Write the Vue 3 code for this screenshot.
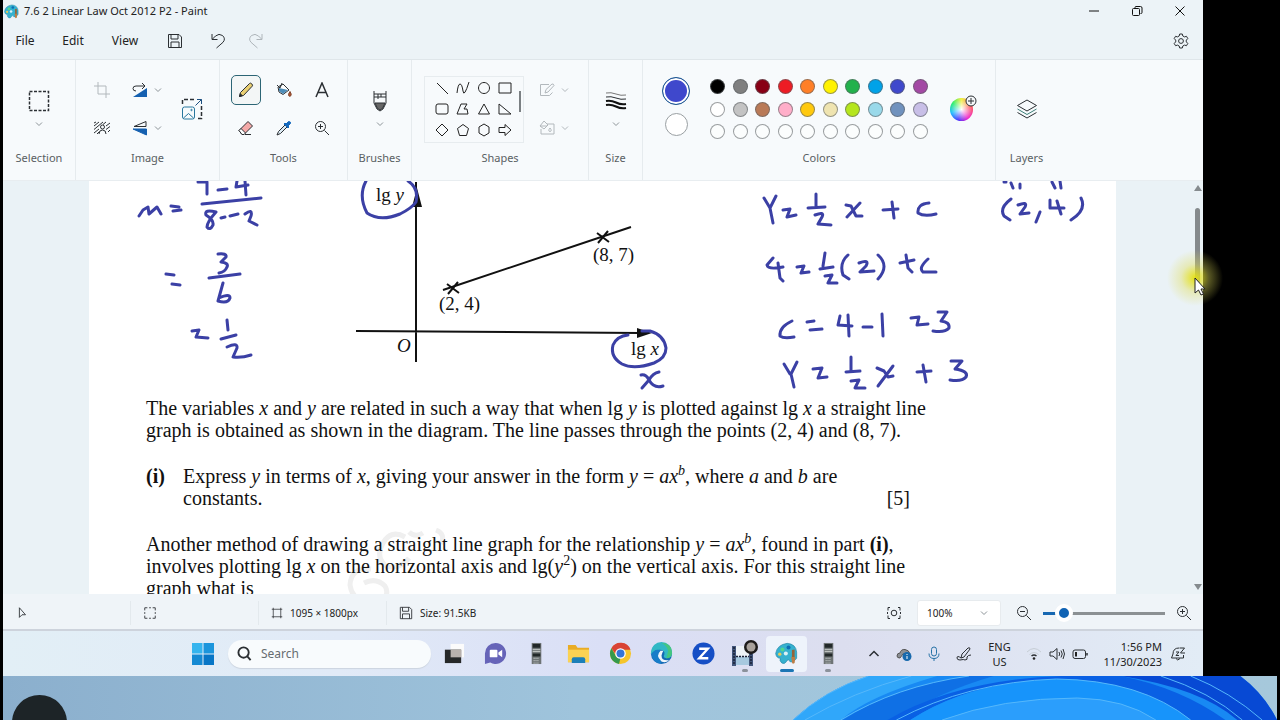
<template>
  <div class="desktop">
    <main class="paint">
      <header class="titlebar">
        <svg class="app-icon" viewBox="0 0 34 34"><use href="#palette" /></svg>
        <h1>7.6 2 Linear Law Oct 2012 P2 - Paint</h1>
        <div class="window-buttons">
          <button aria-label="Minimize"><svg viewBox="0 0 12 12"><path d="M1 6h10" /></svg></button>
          <button aria-label="Restore"><svg viewBox="0 0 12 12"><rect x="1.5" y="3.500" width="7" height="7" rx="1" /><path d="M4 3V2.500q0-1 1-1h4.500q1.500 0 1.500 1.500v4.500q0 1-1 1h-.5" /></svg></button>
          <button aria-label="Close"><svg viewBox="0 0 12 12"><path d="M1.500 1.500l9 9M10.500 1.500l-9 9" /></svg></button>
        </div>
      </header>

      <nav class="menubar">
        <button v-for="item in menus" :key="item" class="menu">{{ item }}</button>
        <button class="menu-icon save" aria-label="Save"><svg viewBox="0 0 16 16"><use href="#floppy" /></svg></button>
        <button class="menu-icon" aria-label="Undo"><svg viewBox="0 0 16 16"><path d="M2 1v5.500h5.500M2.500 6L5.500 3q3.500-3 7-.5 3.500 3.300.5 6.800L6.500 15" /></svg></button>
        <button class="menu-icon redo" aria-label="Redo" disabled><svg viewBox="0 0 16 16"><path d="M14 1v5.500H8.500M13.500 6l-3-3q-3.500-3-7-.5-3.500 3.300-.5 6.800L9.500 15" /></svg></button>
        <button class="menu-icon settings" aria-label="Settings">
          <svg viewBox="0 0 16 16"><path d="M6.700 1h2.600l.5 2 1.700.9 2-.6 1.300 2.300-1.500 1.500v1.800l1.500 1.500-1.300 2.300-2-.6-1.700.9-.5 2H6.700l-.5-2-1.700-.9-2 .6-1.300-2.300 1.500-1.500V7.100L1.200 5.600l1.300-2.300 2 .6L6.200 3z" /><circle cx="8" cy="8" r="2.400" /></svg>
        </button>
      </nav>

      <section class="ribbon">
        <div class="group selection">
          <button class="stack" aria-label="Selection">
            <svg class="icon-lg" viewBox="0 0 22 22"><rect x="1.500" y="1.500" width="19" height="19" stroke-width="1.500" stroke-dasharray="3 1.500" /></svg>
            <svg class="chevron" viewBox="0 0 8 8"><use href="#down" /></svg>
          </button>
          <span class="label">Selection</span>
        </div>

        <div class="group image">
          <div class="image-tools">
            <button class="faded" aria-label="Crop"><svg viewBox="0 0 16 16"><path d="M4 0v12h12M0 4h12v12" /></svg></button>
            <button class="split" aria-label="Rotate">
              <svg viewBox="0 0 16 16"><path d="M10 1l3 3-3 3M13 4H4Q1 4 1 6.500T4 9" /><path d="M15 6v9H1z" fill="#1560b0" stroke="none" /></svg>
              <svg class="chevron" viewBox="0 0 8 8"><use href="#down" /></svg>
            </button>
            <button class="resize" aria-label="Resize">
              <svg class="icon-lg" viewBox="0 0 22 22"><path d="M1.500 6V1.500H14M20.500 8v12.500H15" stroke-dasharray="4 2" stroke-width="1.500" /><path d="M14.500 7.500L20.500 1.500M16 1.500h4.500V6" stroke="#1d4f80" /><rect x="1.500" y="9" width="12" height="12" rx="2" stroke="#27769d" /><path d="M2.500 20l5-4.500 5 4.500" stroke="#27769d" /><circle cx="10.500" cy="12" r=".7" stroke="#27769d" /></svg>
            </button>
            <button aria-label="Remove background"><svg viewBox="0 0 16 16"><path d="M0 6l5-4M0 9.500L9 2M12 2l-3 2.500M0 13l5-4M16 3l-4 3M16 6.500l-4 3M16 10l-2 2M3 14l2-2M0 3l2-1" /><circle cx="8.500" cy="7" r="2" /><path d="M5 14q0-4 3.500-4t3.500 4" /></svg></button>
            <button class="split" aria-label="Flip">
              <svg viewBox="0 0 16 16"><path d="M14 1.500v5H2z" /><path d="M14.500 9v6L1 9z" fill="#1560b0" stroke="#1560b0" /></svg>
              <svg class="chevron" viewBox="0 0 8 8"><use href="#down" /></svg>
            </button>
          </div>
          <span class="label">Image</span>
        </div>

        <div class="group tools">
          <div class="tool-grid">
            <button class="active" aria-label="Pencil"><svg viewBox="0 0 16 16"><path d="M1.500 14.500l1-4L11.500 1.500q1-1 2.300.4t.4 2.300L5.500 13.500z" fill="#e9cf72" /><path d="M1.500 14.500l.8-2.800 2 2z" fill="#222" /></svg></button>
            <button aria-label="Fill"><svg viewBox="0 0 16 16"><path d="M2 5l5-3 6 6-6 4.500L3 10z" fill="#fff" /><path d="M3 6l9 2-5 4-4-3z" fill="#4e8db8" stroke="none" /><path d="M6 1l-2 5M1 3l3 3" /><path d="M14 9.500q2 3 .8 4.300-1 1-2 0-1-1.300 1.200-4.300z" fill="#b85a32" stroke="#7e432d" /></svg></button>
            <button aria-label="Text"><svg viewBox="0 0 16 16"><path d="M2 15L8 1l6 14M4 10.500h8" stroke-width="1.500" /></svg></button>
            <button aria-label="Eraser"><svg viewBox="0 0 16 16"><path d="M1 10.500L10 1.500l4.500 4.500-8.500 8.500H4z" fill="#f4a9a8" /><path d="M1 10.500l2-2L7.500 13 6 14.500H4z" fill="#fff" /><path d="M7 14.500h6" /></svg></button>
            <button aria-label="Color picker"><svg viewBox="0 0 16 16"><path d="M9 5L2.500 11.500 1 15l3.500-1.500L11 7" fill="#dceaf3" /><path d="M8 4l4 4 1-1-1-1 2.500-2.500q.5-2-2-2L10 4 9 3z" fill="#1669bd" stroke="#1669bd" /></svg></button>
            <button aria-label="Magnifier"><svg viewBox="0 0 16 16"><use href="#zoom-in" /></svg></button>
          </div>
          <span class="label">Tools</span>
        </div>

        <div class="group brushes">
          <button class="stack" aria-label="Brushes">
            <svg class="icon-lg" viewBox="0 0 22 22"><path d="M5 1v6h12V1M5 4h12M5 7v6l3 6 3 2 3-2 3-6V7" /><path d="M6 13h10l-2.500 5.500L11 20l-2.500-1.500z" fill="#666" /><path d="M9 4v5M12 4v3" /></svg>
            <svg class="chevron" viewBox="0 0 8 8"><use href="#down" /></svg>
          </button>
          <span class="label">Brushes</span>
        </div>

        <div class="group shapes">
          <div class="shape-row">
            <div class="gallery">
              <button v-for="shape in shapes" :key="shape.name" :aria-label="shape.name">
                <svg viewBox="0 0 14 14"><path :d="shape.d" /></svg>
              </button>
            </div>
            <div class="shape-options">
              <button class="split faded" aria-label="Shape outline">
                <svg viewBox="0 0 16 16"><path d="M10 2.500H1.500v11h9l3-3M6 11l1-3.500L13 2q1.500-.5 2 1.500L9 10z" /></svg>
                <svg class="chevron" viewBox="0 0 8 8"><use href="#down" /></svg>
              </button>
              <button class="split faded" aria-label="Shape fill">
                <svg viewBox="0 0 16 16"><path d="M8 4h7v10H2V9M5 1l4 4-4 4-4-3zM1 6h7M11 8q2.500 3 0 3.500-2.500-.5 0-3.500z" /></svg>
                <svg class="chevron" viewBox="0 0 8 8"><use href="#down" /></svg>
              </button>
            </div>
          </div>
          <span class="label">Shapes</span>
        </div>

        <div class="group size">
          <button class="stack" aria-label="Size">
            <svg class="icon-lg" viewBox="0 0 22 22"><path d="M1 3q5-1 10 1t10 1" stroke-width="1" stroke="#777" /><path d="M1 7q5-1 10 1t10 1" /><path d="M1 11q5-1 10 1.500T21 14" stroke-width="2" stroke="#111" /><path d="M1 15q5-1 10 1.500T21 18" stroke-width="2" stroke="#111" /></svg>
            <svg class="chevron" viewBox="0 0 8 8"><use href="#down" /></svg>
          </button>
          <span class="label">Size</span>
        </div>

        <div class="group colors">
          <div class="color-row">
            <div class="current">
              <button class="primary" aria-label="Color 1"></button>
              <button class="secondary" aria-label="Color 2"></button>
            </div>
            <div class="swatches">
              <button v-for="(color, i) in colors" :key="i" :style="{ background: color }" :aria-label="'Swatch ' + (i + 1)"></button>
            </div>
            <button class="wheel" aria-label="Edit colors"><svg viewBox="0 0 12 12"><circle cx="6" cy="6" r="5" fill="#f5f8fa" /><path d="M6 3v6M3 6h6" /></svg></button>
          </div>
          <span class="label">Colors</span>
        </div>

        <div class="group layers">
          <button class="stack" aria-label="Layers">
            <svg class="icon-lg" viewBox="0 0 22 22"><path d="M11 2l9.500 5.500L11 13 1.500 7.500z" /><path d="M1.500 11L11 16.500 20.500 11" stroke="#3b7f78" /><path d="M1.500 14.500L11 20l9.500-5.500" /></svg>
          </button>
          <span class="label">Layers</span>
        </div>
      </section>

      <section class="workspace">
        <article class="page">
          <svg class="figure" viewBox="89 181 1027 216" role="img" aria-label="Straight line graph with worked notes">
            <g class="watermark">
              <path d="M405 537q-14-8-22 6t3 23q14 4 23-8M409 532q6 6 14 1M436 530q10 4 5 14M371 569q-20-2-21 16 2 15 17 16M364 583q12-6 21 3 5 8-4 17" />
            </g>
            <g class="axes">
              <path d="M416 182V362M356 331L640 333M443 290L631 227" />
              <path d="M447 284l12 9M458 282l-10 12M597 233l12 9M608 231l-10 12" />
              <path class="head" d="M412 207l5-19 5 19zM637 328v10l15-5z" />
              <text x="376" y="201">lg <tspan class="var">y</tspan></text>
              <text x="631" y="355">lg <tspan class="var">x</tspan></text>
              <text x="439" y="310">(2, 4)</text>
              <text x="593" y="261">(8, 7)</text>
              <text class="var" x="397" y="352">O</text>
            </g>
            <g class="ink">
              <path v-for="(d, i) in ink" :key="i" :d="d" />
            </g>
          </svg>
          <div class="question">
            <p>
              <span class="line">The variables <i>x</i> and <i>y</i> are related in such a way that when lg <i>y</i> is plotted against lg <i>x</i> a straight line</span>
              <span class="line">graph is obtained as shown in the diagram. The line passes through the points (2, 4) and (8, 7).</span>
            </p>
            <div class="part">
              <b>(i)</b>
              <p>
                <span class="line">Express <i>y</i> in terms of <i>x</i>, giving your answer in the form <i>y</i> = <i>ax<sup>b</sup></i>, where <i>a</i> and <i>b</i> are</span>
                <span class="line last">constants. <span>[5]</span></span>
              </p>
            </div>
            <p>
              <span class="line">Another method of drawing a straight line graph for the relationship <i>y</i> = <i>ax<sup>b</sup></i>, found in part <b>(i)</b>,</span>
              <span class="line">involves plotting lg <i>x</i> on the horizontal axis and lg(<i>y</i><sup>2</sup>) on the vertical axis. For this straight line</span>
              <span class="line">graph what is</span>
            </p>
          </div>
        </article>
        <div class="scrollbar">
          <svg viewBox="0 0 8 8"><path d="M4 1l4 6H0z" /></svg>
          <div class="thumb"></div>
          <svg class="bottom" viewBox="0 0 8 8"><path d="M4 7L0 1h8z" /></svg>
        </div>
      </section>

      <footer class="statusbar">
        <div class="cell position"><svg viewBox="0 0 16 16"><path d="M5 2v11l3-3h4z" /></svg></div>
        <div class="cell area"><svg viewBox="0 0 16 16"><path d="M2 5V2h3M11 2h3v3M14 11v3h-3M5 14H2v-3M7 2h2M7 14h2M2 7v2M14 7v2" /></svg></div>
        <div class="cell dims"><svg viewBox="0 0 16 16"><path d="M3 1v14M13 1v14M1 3h14M1 13h14" /></svg>1095 × 1800px</div>
        <div class="cell file"><svg viewBox="0 0 16 16"><use href="#floppy" /></svg>Size: 91.5KB</div>
        <div class="zoom">
          <button aria-label="Fit to window"><svg viewBox="0 0 16 16"><path d="M4 2.500H2v3M12 2.500h2v3M14 10.500v3h-2M4 13.500H2v-3M1.500 7v2M14.500 7v2" /><circle cx="8" cy="8" r="2.800" /></svg></button>
          <div class="zoom-level">
            <select v-model="level" aria-label="Zoom level"><option>100%</option><option>200%</option></select>
            <svg class="chevron" viewBox="0 0 8 8"><use href="#down" /></svg>
          </div>
          <button aria-label="Zoom out"><svg viewBox="0 0 16 16"><circle cx="6.500" cy="6.500" r="5" /><path d="M10.500 10.500L15 15M4 6.500h5" /></svg></button>
          <input v-model="slider" type="range" min="0" max="100" aria-label="Zoom" />
          <button aria-label="Zoom in"><svg viewBox="0 0 16 16"><use href="#zoom-in" /></svg></button>
        </div>
      </footer>

      <div class="pointer">
        <svg viewBox="0 0 12 19"><path d="M1 1v15l3.500-3 2.500 5 2.500-1-2.500-5H11z" /></svg>
      </div>
    </main>

    <nav class="taskbar">
      <button class="start" aria-label="Start">
        <svg viewBox="0 0 22 22"><path d="M0 0h10.500v10.500H0z" fill="#35b4ee" /><path d="M11.500 0H22v10.500H11.500z" fill="#1b95dc" /><path d="M0 11.500h10.500V22H0z" fill="#168ad3" /><path d="M11.500 11.500H22V22H11.500z" fill="#0876c6" /></svg>
      </button>
      <label class="search">
        <svg viewBox="0 0 16 16"><circle cx="7" cy="7" r="5.500" /><path d="M11 11l3.500 4" /></svg>
        <input type="text" placeholder="Search" aria-label="Search" />
      </label>
      <div class="apps">
        <button aria-label="Task view"><svg viewBox="0 0 24 24"><path d="M9 2h14v14H9z" fill="#fbfbfb" /><path d="M3 8h17v14H3z" fill="#262829" /><path d="M9 8h11v8H9z" fill="#b9b2ae" /></svg></button>
        <button aria-label="Chat"><svg viewBox="0 0 24 24"><path d="M12 1a11 11 0 1 1-5.500 20.500L1 23V12A11 11 0 0 1 12 1z" fill="#6664b8" /><rect x="6" y="8" width="8" height="8" rx="1" fill="#fff" /><path d="M15 11l4-3v8l-4-3z" fill="#fff" /></svg></button>
        <button aria-label="Calculator"><svg viewBox="0 0 24 24"><use href="#remote" /></svg></button>
        <button aria-label="File Explorer"><svg viewBox="0 0 24 24"><path d="M1 3h8l2 3h12v15H1z" fill="#e9ac25" /><path d="M1 8h22v13H1z" fill="#fbd253" /><path d="M5 22v-4q0-2 2-2h10q2 0 2 2v4z" fill="#1c7fb8" /></svg></button>
        <button aria-label="Chrome"><svg viewBox="0 0 24 24"><circle cx="12" cy="12" r="11" fill="#f5c52b" /><path d="M2.500 6.500A11 11 0 0 1 22.500 8H12l-4 6z" fill="#d94235" /><path d="M2.500 6.500l5.200 9 4.300 1-1.500 6.400A11 11 0 0 1 2.500 6.500z" fill="#35994d" /><circle cx="12" cy="12" r="5.500" fill="#fff" /><circle cx="12" cy="12" r="4.200" fill="#3375d6" /></svg></button>
        <button aria-label="Edge"><svg viewBox="0 0 24 24"><circle cx="12" cy="12" r="11" fill="#1569b4" /><path d="M1 11A11 11 0 0 1 23 11q0 6-6 6-4-1-2-4 1-5-5-5-6 0-9 5z" fill="#31b8c5" /><path d="M12 1q11 0 11 10 0 6-6 6l2-8q-2-6-7-8z" fill="#45c680" /><path d="M10 9q-5 5 0 10 5 4 10 0-8 1-8-5 1-4 2-5z" fill="#eef5fb" /><path d="M1.500 13Q5 6 11 9q-5 5 0 10l1 4Q3 22 1.500 13z" fill="#177dc9" /></svg></button>
        <button aria-label="Zoom app"><svg viewBox="0 0 24 24"><circle cx="12" cy="12" r="11.500" fill="#164fc5" /><path d="M7.500 7h9l-9 10h9.500" fill="none" stroke="#fff" stroke-width="2.500" /></svg></button>
        <button class="running" aria-label="Recorder"><svg class="wide" viewBox="0 0 28 28"><path d="M1 6h4v20H1zM18 6h4v20h-4z" fill="#42557a" /><path d="M5 6h13v10H5z" fill="#edf2f7" /><path d="M5 17h13v8H5z" fill="#a6c8df" /><path d="M5 16.500h13M3 7v18M20 7v18" stroke="#1a2236" stroke-width="1.500" stroke-dasharray="2 1" /><circle cx="20" cy="7" r="7" fill="#1d1b1a" /><circle cx="20" cy="7" r="4.500" fill="#a8a19b" /></svg></button>
        <button class="running current-app" aria-label="Paint"><svg viewBox="0 0 34 34"><use href="#palette" /></svg></button>
        <button class="running" aria-label="Remote"><svg viewBox="0 0 24 24"><use href="#remote" /></svg></button>
      </div>
      <div class="tray">
        <button aria-label="Hidden icons"><svg viewBox="0 0 16 16"><path d="M3.500 10L8 5.500l4.500 4.500" stroke-width="1.500" /></svg></button>
        <button aria-label="OneDrive"><svg viewBox="0 0 16 16"><path d="M1 10q0-3 3-3 1-4 5-3.500t5 4.500H7L4 12q-3 0-3-2z" fill="#8b8f94" stroke="#555" /><circle cx="11" cy="10.500" r="4.500" fill="#1669ad" stroke="none" /><path d="M11 10v3M11 8v1" stroke="#fff" /></svg></button>
        <button aria-label="Microphone"><svg viewBox="0 0 16 16"><rect x="5.500" y="1" width="5" height="9" rx="2.500" stroke="#2772a6" /><path d="M3 7.500q0 5 5 5t5-5M8 12.500V15" stroke="#2772a6" /></svg></button>
        <button aria-label="Pen"><svg viewBox="0 0 16 16"><path d="M5 12l1-4 6-6q2-1 2 1L8 11zM5 12q-4-3-4 0 0 2 3 2 4-1 5 0 3 0 2-3 1-2 4-2" /></svg></button>
        <button class="lang">ENG<br />US</button>
        <button class="network" aria-label="Network and sound">
          <svg viewBox="0 0 16 16"><path d="M1 6q7-7 14 0M3.500 8.500q4.500-4 9 0" stroke="#c6cdd5" /><path d="M5.500 10q2.500-2 5 0" stroke-width="1.500" /><circle cx="8" cy="12.500" r="1.300" fill="#222" stroke="none" /></svg>
          <svg viewBox="0 0 16 16"><path d="M1 6h3l4-3.500v11L4 10H1zM10 6q1.500 2 0 4M12 4.500q2.500 3.500 0 7M14 3q3 5 0 10" /></svg>
          <svg viewBox="0 0 16 16"><rect x="1" y="4" width="12.500" height="8.500" rx="2" /><path d="M15 7v2.500" stroke-width="1.500" /><path d="M3 6h2v4.500H3z" fill="#222" stroke="none" /></svg>
        </button>
        <time>1:56 PM<br />11/30/2023</time>
        <button class="bell" aria-label="Notifications"><svg viewBox="0 0 16 16"><path d="M9 2Q3 2 3 8l-1.500 4h12V9M6 12.500q1.500 3 4 0M9.500 2h5L10.500 7H15M6 6h3L6 9.500h3" /></svg></button>
      </div>
    </nav>

    <div class="wallpaper">
      <svg viewBox="0 0 487 44" preserveAspectRatio="none">
        <path d="M0 44Q32 14 76 0H450Q474 18 487 44z" fill="#1889f3" />
        <path d="M0 44Q32 14 76 0H145Q76 20 48 44z" fill="#30a7fa" />
        <path d="M50 44Q104 10 177 0H202Q146 16 104 44z" fill="#0f70e5" />
        <path d="M95 44Q164 4 270 0H330Q390 12 435 44H400Q350 4 265 3 176 6 118 44z" fill="#0960e4" />
        <path d="M118 44Q176 6 265 3 350 4 400 44z" fill="#1794fb" />
        <path d="M150 44Q210 22 286 22 334 23 365 44z" fill="#2b9efc" />
        <path d="M330 0H450Q474 18 487 44H447Q410 12 330 0z" fill="#0749d4" />
        <path class="edge" d="M0 44Q32 14 76 0M12 44Q60 16 119 0M48 44Q104 10 177 0M104 44Q176 6 265 3 350 4 400 44M150 44Q210 22 286 22 334 23 365 44M370 0Q420 16 452 44M400 0Q440 16 472 44" />
      </svg>
      <div class="disc"></div>
    </div>

    <svg class="symbols" aria-hidden="true">
      <symbol id="down" viewBox="0 0 8 8"><path d="M1 2.500l3 3 3-3" /></symbol>
      <symbol id="zoom-in" viewBox="0 0 16 16"><circle cx="6.500" cy="6.500" r="5" /><path d="M10.500 10.500L15 15M4 6.500h5M6.500 4v5" /></symbol>
      <symbol id="floppy" viewBox="0 0 16 16"><path d="M2 1.500h10L14.500 4v10.500h-13V1.500zM4 1.500V6h7V1.500M4 14.500V9h8v5.500" /></symbol>
      <symbol id="palette" viewBox="0 0 34 34">
        <path d="M18 2Q31 3 32 15v9q-5 7-10 5-2-6-6 1-2 3-6 1-4-4-2-7-6 0-7-7Q3 4 18 2z" fill="#35b1cf" stroke="#2785a6" />
        <circle cx="20" cy="8" r="3" fill="#0c6db5" stroke="none" /><circle cx="11" cy="11" r="3" fill="#51d590" stroke="none" /><circle cx="7" cy="18" r="2.500" fill="#e6cb58" stroke="none" /><circle cx="16" cy="17" r="3" fill="#d9f2f7" stroke="none" />
        <path d="M25 12l4-1v12h-4z" fill="#93643a" stroke="none" /><path d="M24 22h6l-1 9q-4 3-4-2z" fill="#bc7d45" stroke="none" />
      </symbol>
      <symbol id="remote" viewBox="0 0 24 24">
        <path d="M7 1h10v22H7z" fill="#6e7475" stroke="none" /><path d="M8 2h8v4H8zM8 12h8v3H8z" fill="#222829" stroke="none" /><path d="M8 8h8M8 10h8" stroke="#c8ccca" /><path d="M9 17h6M9 19.500h6M9 22h6" stroke="#dfe3e2" stroke-dasharray="1 1" />
      </symbol>
    </svg>
  </div>
</template>

<script setup>
import { ref } from 'vue'

const level = ref('100%')
const slider = ref(12)

const menus = ['File', 'Edit', 'View']

const shapes = [
  { name: 'Line', d: 'M2 2l11 11' },
  { name: 'Curve', d: 'M1 12q1-9 3-9t3 7 6-9' },
  { name: 'Oval', d: 'M7 1.500a5.500 5.500 0 1 0 .01 0z' },
  { name: 'Rectangle', d: 'M1 2h12v10H1z' },
  { name: 'Rounded rectangle', d: 'M3 2h8q2 0 2 2v6q0 2-2 2H3q-2 0-2-2V4q0-2 2-2z' },
  { name: 'Polygon', d: 'M5 2h6L8 7h3l1 5H1z' },
  { name: 'Triangle', d: 'M7 2l5.500 10h-11z' },
  { name: 'Right triangle', d: 'M1 2v10h12z' },
  { name: 'Diamond', d: 'M7 1l6 6-6 6-6-6z' },
  { name: 'Pentagon', d: 'M7 1.500l5.500 4-2 7h-7l-2-7z' },
  { name: 'Hexagon', d: 'M7 1l5 3v6l-5 3-5-3V4z' },
  { name: 'Right arrow', d: 'M1 4.500h6v-3L13 7l-6 5.500v-3H1z' }
]

const colors = [
  '#000000', '#7f7f7f', '#880015', '#ed1c24', '#ff7f27', '#fff200', '#22b14c', '#00a2e8', '#3f48cc', '#a349a4',
  '#ffffff', '#c3c3c3', '#b97a57', '#ffaec9', '#ffc90e', '#efe4b0', '#b5e61d', '#99d9ea', '#7092be', '#c8bfe7',
  ...Array(10).fill('#fbfdfd')
]

// pen strokes, one entry per written line
const ink = [
  // m = (7 - 4) / (8 - 2)
  'M139 216L143 210 148 207 149 214 157 207 161 214M171 206L179 207M173 211L181 210M198 182H207V194M218 190L227 189M237 181L236 187 248 185M245 181L246 195M202 204L261 198M216 212Q204 209 206 215 214 220 213 225 210 231 207 227 207 222 216 212M221 218L225 217M230 216L238 214M245 214Q253 208 251 216L249 221 257 225',
  // = 3 / 6
  'M166 274L174 275M172 284L180 285M218 254Q227 253 226 257L221 262Q229 263 227 267 225 272 219 273M209 278L240 274M223 283L218 301Q228 304 230 298 230 293 219 298',
  // = 1 / 2
  'M192 331L199 330 196 337 208 338M227 320L228 330M221 339L236 335M227 347Q238 342 237 348L233 357Q242 358 251 355',
  // loops round the axis names
  'M366 181Q358 196 367 213 380 222 400 214 412 208 416 202 419 188 408 181',
  'M628 335Q617 336 613 345 610 357 622 364 634 370 654 363 666 358 666 348 664 335 650 331L642 331',
  'M641 375Q646 374 649 380 654 389 663 386M659 372Q653 373 649 380L642 388',
  // Y = 1/2 x + c
  'M764 198L770 208M776 196L770 208 773 223M783 210L790 209 787 217 796 215M816 194V206M808 208L825 207M815 215Q825 211 822 217L818 224 831 225M846 205L851 206 856 216 862 216M860 203L847 217M883 210L898 209M892 202L894 218M929 203Q917 204 918 213 924 217 936 214',
  // 4 = 1/2 (2) + c
  'M773 258L767 265Q768 270 783 267M778 263L780 278 783 281M797 267L804 266 801 273 809 272M825 253L823 266M820 269L833 267M825 276L832 275 828 283 837 283M848 255Q839 263 843 275L849 279M859 263Q870 259 866 266L860 272 874 271M878 255Q890 266 878 279M900 263L914 260M906 255L908 268 912 272M928 259Q918 268 923 272L936 272',
  // c = 4 - 1 = 3
  'M792 321Q779 327 780 336 784 339 794 337M807 322L814 321M810 330L822 329M840 316L838 325 852 326M848 315L849 336M863 327L872 327M882 314L883 336M911 318L919 317 917 325 928 324M938 312L947 312 941 321Q950 322 949 328 945 333 933 331',
  // Y = 1/2 x + 3
  'M784 364L790 374M797 362L791 374 794 387M813 369L822 368 818 378 827 377M851 357V370M846 372L860 371M851 381L859 380 855 388 865 388M877 368L884 371 888 377 893 376M893 366L878 386M917 372L931 371M923 365L926 382M951 361L962 361 955 369Q969 371 966 377 962 382 950 380',
  // (2, 4)
  'M1011 199Q999 208 1004 216L1010 220M1018 205Q1028 201 1025 207L1020 214 1029 213M1040 212L1036 222M1050 200V208L1064 208M1057 201L1061 214M1081 198Q1087 210 1071 220M1004 182H1006M1011 183L1013 188M1020 184V188M1052 182L1055 188M1060 181L1061 188'
]
</script>

<style>
body {
  margin: 0;
  background: #000;
}
</style>

<style scoped>
.desktop {
  display: flex;
  flex-direction: column;
  height: 100vh;
  padding: 0 3px;
  box-sizing: border-box;
  overflow: hidden;
  background: #000;
  color: #222;
  font-family: "Noto Sans", "Open Sans", sans-serif;
  font-size: 12px;
}

.symbols {
  position: absolute;
  width: 0;
  height: 0;
}

button {
  display: flex;
  align-items: center;
  justify-content: center;
  padding: 0;
  border: 0;
  background: none;
  color: inherit;
  font: inherit;
}

svg {
  display: block;
  flex: none;
  width: 16px;
  height: 16px;
  fill: none;
  stroke: #2b2f33;
}

.paint {
  position: relative;
  display: flex;
  flex: 1;
  flex-direction: column;
  min-height: 0;
  margin-right: 74px;
  background: #ecf3f7;
}

.titlebar {
  display: flex;
  align-items: center;
  height: 22px;
  padding: 0 13px 0 1px;
}

.app-icon {
  width: 15px;
  height: 15px;
}

h1 {
  flex: 1;
  margin: 0 0 0 5px;
  font-size: 11px;
  font-weight: 400;
  line-height: 20px;
}

.window-buttons {
  display: flex;
  gap: 22px;
}

.window-buttons button {
  width: 21px;
  height: 20px;
}

.window-buttons svg {
  width: 12px;
  height: 12px;
  stroke: #111;
}

.menubar {
  display: flex;
  align-items: center;
  height: 38px;
  padding-right: 14px;
  border-bottom: 1px solid #dfe6ea;
  box-sizing: border-box;
}

.menu {
  width: 52px;
}

.menu:first-child {
  width: 44px;
}

.menu-icon {
  width: 38px;
}

.menu-icon.save {
  width: 48px;
}

.menu-icon.redo svg {
  stroke: #aeb5ba;
}

.menu-icon.settings {
  width: 16px;
  margin-left: auto;
}

.ribbon {
  display: flex;
  height: 121px;
  background: #f7fafc;
  border-bottom: 1px solid #e8edf0;
  box-sizing: border-box;
}

.group {
  display: flex;
  flex-direction: column;
  align-items: center;
  padding-top: 11px;
  border-right: 1px solid #e6ebee;
  box-sizing: border-box;
}

.group > :first-child {
  height: 76px;
}

.label {
  line-height: 22px;
  font-size: 11px;
  color: #5a5f63;
}

.stack {
  flex-direction: column;
  gap: 8px;
}

.icon-lg {
  width: 22px;
  height: 22px;
}

.chevron {
  width: 8px;
  height: 8px;
  stroke: #8d9498;
}

.faded svg {
  stroke: #b2b8bc;
}

.selection { width: 73px; }
.image { width: 144px; }
.tools { width: 128px; }
.brushes { width: 64px; }
.shapes { width: 177px; }
.size { width: 54px; }
.colors { width: 353px; }
.layers { width: 61px; border: 0; }

.image-tools {
  display: grid;
  grid-template-columns: 30px 36px 42px;
  grid-template-rows: 38px 38px;
  column-gap: 9px;
  padding-left: 4px;
}

.split {
  gap: 6px;
  padding-left: 6px;
}

.resize {
  grid-row: 1 / 3;
  grid-column: 3;
}

.tool-grid {
  display: grid;
  grid-template-columns: repeat(3, 30px);
  grid-template-rows: repeat(2, 30px);
  gap: 8px;
  align-content: center;
}

.tool-grid .active {
  border: 1px solid #2c6575;
  border-radius: 5px;
  background: #f3f6f6;
}

.shape-row {
  display: flex;
  align-items: center;
  gap: 9px;
  padding-right: 7px;
}

.gallery {
  display: grid;
  grid-template-columns: repeat(4, 21px);
  grid-auto-rows: 21px;
  padding: 1px 8px 1px 6px;
  border: 1px solid #e7ecef;
  background: linear-gradient(#7b8083, #7b8083) right 2px top 14px / 2px 21px no-repeat;
}

.gallery svg {
  width: 14px;
  height: 14px;
  stroke: #222;
}

.shape-options {
  display: grid;
  grid-template-rows: 38px 38px;
}

.color-row {
  display: flex;
  align-items: center;
  padding-right: 3px;
}

.current {
  display: flex;
  flex-direction: column;
  align-items: center;
  gap: 8px;
  margin-right: 20px;
  padding-bottom: 5px;
}

.primary,
.secondary {
  width: 28px;
  height: 28px;
  border: 1px solid #1c5b8d;
  border-radius: 50%;
  background: #3f48cc;
  box-shadow: inset 0 0 0 2px #fff;
}

.secondary {
  width: 23px;
  height: 23px;
  border-color: #999fa2;
  background: #fff;
}

.swatches {
  display: grid;
  grid-template-columns: repeat(10, 15px);
  grid-template-rows: repeat(3, 15px);
  place-content: space-between;
  width: 218px;
  height: 60px;
}

.swatches button {
  border: 1px solid rgba(90, 95, 98, 0.6);
  border-radius: 50%;
}

.wheel {
  align-items: flex-start;
  justify-content: flex-end;
  width: 23px;
  height: 23px;
  margin-left: 22px;
  border-radius: 50%;
  background: radial-gradient(#fff, transparent 70%), conic-gradient(#ee3, #f55 20%, #e2c 40%, #43f 55%, #1bf 70%, #2e6 85%, #ee3);
}

.wheel svg {
  width: 12px;
  height: 12px;
  margin: -3px -4px 0 0;
}

.workspace {
  display: flex;
  flex: 1;
  min-height: 0;
  padding-left: 86px;
  overflow: hidden;
  background: #eaf2f6;
}

.page {
  flex: 1;
  background: #fff;
}

.figure {
  width: 100%;
  height: auto;
  overflow: visible;
}

.watermark {
  stroke: #efefef;
  stroke-width: 5;
}

.axes {
  stroke: #111;
  stroke-width: 2;
}

.axes .head {
  fill: #111;
  stroke: none;
}

.axes text {
  fill: #111;
  stroke: none;
  font: 19px "Liberation Serif", serif;
}

.axes .var {
  font-style: italic;
}

.ink {
  stroke: #3b40a5;
  stroke-width: 3;
  stroke-linecap: round;
  stroke-linejoin: round;
}

.question {
  position: relative;
  display: flex;
  flex-direction: column;
  gap: 24px;
  padding-left: 57px;
  color: #111;
  font: 20px/22px "Liberation Serif", serif;
}

.question p {
  margin: 0;
}

.line {
  display: block;
  white-space: nowrap;
}

.line.last {
  display: flex;
  justify-content: space-between;
}

.part {
  display: grid;
  grid-template-columns: 37px 727px;
}

sup {
  font-size: 14px;
  line-height: 0;
}

.scrollbar {
  display: flex;
  flex-direction: column;
  align-items: center;
  width: 11px;
  margin-left: 76px;
  padding: 3px 0;
}

.scrollbar svg {
  width: 8px;
  height: 8px;
  fill: #858b8e;
  stroke: none;
}

.scrollbar .thumb {
  width: 5px;
  height: 76px;
  margin-top: 16px;
  border-radius: 3px;
  background: #858a8c;
}

.scrollbar .bottom {
  margin-top: auto;
}

/* mouse pointer with its highlight, floating over the scrollbar */
.pointer {
  position: absolute;
  top: 250px;
  right: -20px;
  width: 56px;
  height: 56px;
  background: radial-gradient(closest-side, rgba(228, 224, 20, 0.9) 5%, rgba(224, 221, 90, 0.4) 50%, transparent);
}

.pointer svg {
  width: 12px;
  height: 19px;
  margin: 27px 0 0 27px;
  fill: #fff;
  stroke: #222;
}

.statusbar {
  display: flex;
  align-items: center;
  height: 37px;
  padding-top: 3px;
  border-bottom: 2px solid #cdd3dc;
  box-sizing: border-box;
  background: #eff4f8;
  font-size: 10px;
}

.cell {
  display: flex;
  align-items: center;
  gap: 7px;
  width: 128px;
  height: 24px;
  padding-left: 12px;
  border-right: 1px solid #e3e9ed;
  box-sizing: border-box;
}

.cell svg {
  width: 14px;
  height: 14px;
}

.dims svg {
  width: 12px;
  height: 12px;
}

.file {
  border: 0;
}

.zoom {
  display: flex;
  align-items: center;
  margin-left: auto;
  padding-right: 11px;
}

.zoom-level {
  position: relative;
  margin: 0 15px;
}

.zoom-level select {
  width: 84px;
  height: 26px;
  padding: 0 9px;
  appearance: none;
  border: 1px solid #e7ebee;
  border-radius: 3px;
  background: #fff;
  color: #222;
  font: inherit;
}

.zoom-level .chevron {
  position: absolute;
  top: 9px;
  right: 13px;
  pointer-events: none;
}

.zoom input {
  width: 122px;
  height: 18px;
  margin: 0 11px;
  appearance: none;
  background: linear-gradient(90deg, #1768b2 12px, #8b9093 12px) center / 100% 3px no-repeat;
}

.zoom input::-webkit-slider-thumb {
  width: 18px;
  height: 18px;
  appearance: none;
  border: 4px solid #fff;
  border-radius: 50%;
  background: #1063b4;
}

.taskbar {
  display: flex;
  align-items: center;
  height: 45px;
  margin-right: 74px;
  padding-left: 189px;
  box-sizing: border-box;
  background: linear-gradient(90deg, #e2eff6, #e1eaf7 28%, #dadff6 50%, #dcdeef 70%, #e2ecf6);
}

.start svg {
  width: 22px;
  height: 22px;
  stroke: none;
}

.search {
  display: flex;
  align-items: center;
  gap: 9px;
  width: 203px;
  height: 28px;
  margin-left: 14px;
  padding-left: 9px;
  box-sizing: border-box;
  border-radius: 14px;
  background: #f8fbfd;
  box-shadow: 0 1px 1px #ccd4df;
}

.search svg {
  width: 15px;
  height: 15px;
  stroke-width: 2;
}

.search input {
  width: 150px;
  padding: 0;
  border: 0;
  outline: 0;
  background: none;
  font: inherit;
}

.search input::placeholder {
  color: #666c70;
}

.apps {
  display: flex;
  width: 416px;
  margin-left: 2px;
}

.apps button {
  position: relative;
  flex: 1;
  height: 36px;
}

.apps svg {
  width: 23px;
  height: 23px;
  stroke: none;
}

.apps .wide {
  width: 28px;
  height: 28px;
}

.running::after {
  position: absolute;
  bottom: 0;
  width: 6px;
  height: 3px;
  border-radius: 2px;
  background: #8b919b;
  content: "";
}

.apps .current-app {
  border-radius: 4px;
  background: #eef3fb;
}

.current-app::after {
  width: 14px;
  background: #1c75b5;
}

.tray {
  display: flex;
  align-items: center;
  margin-left: auto;
  padding-right: 17px;
  font-size: 11px;
  line-height: 15px;
}

.tray > button {
  width: 30px;
}

.tray .lang {
  width: 40px;
}

.tray .network {
  gap: 7px;
  width: auto;
  margin-left: 7px;
}

.tray time {
  margin-left: 15px;
  text-align: right;
}

.tray .bell {
  width: 16px;
  margin-left: 8px;
}

.wallpaper {
  position: relative;
  display: flex;
  justify-content: flex-end;
  height: 44px;
  overflow: hidden;
  background: linear-gradient(90deg, #8bafcd, #9fc4dc 45%, #a6c8db);
}

.wallpaper svg {
  width: 38%;
  height: 44px;
  stroke: none;
}

.wallpaper .edge {
  stroke: #55b8fb;
  stroke-width: 1;
}

/* webcam bubble overlapping the wallpaper */
.disc {
  position: absolute;
  top: 19px;
  left: 9px;
  width: 55px;
  height: 55px;
  border-radius: 50%;
  background: #1d2427;
}
</style>
